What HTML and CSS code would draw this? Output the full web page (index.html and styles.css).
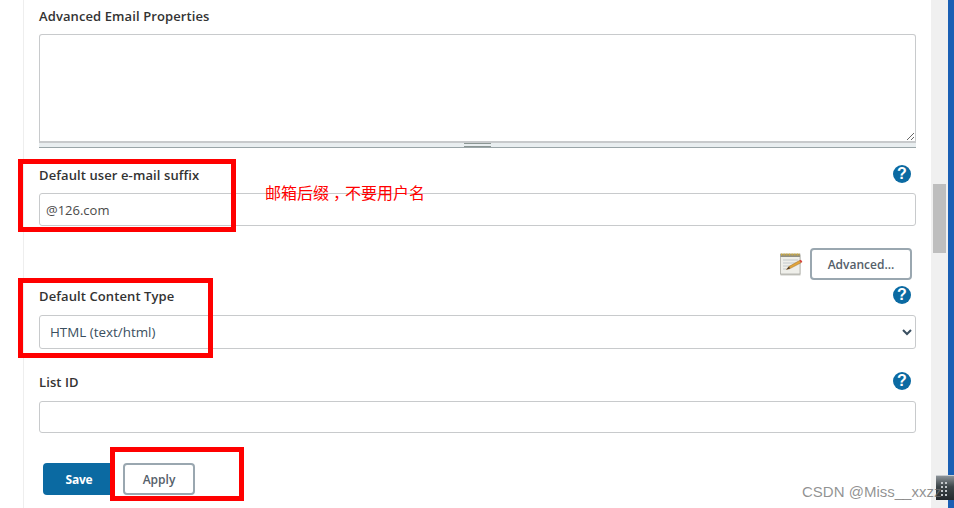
FILE: index.html
```html
<!DOCTYPE html>
<html lang="en">
  <head>
    <meta charset="UTF-8" />
    <title>Configure System</title>
    <link rel="stylesheet" href="styles.css">
  </head>
  <body>
    <div class="page">
      <div class="gutter"></div>

      <main class="main">
        <!-- Advanced properties -->
        <label class="label">Advanced Email Properties</label>
        <div class="textarea-wrap">
          <textarea class="textarea"></textarea>
          <div class="grippie"><span class="grip-handle"></span></div>
        </div>

        <!-- Suffix -->
        <div class="label-row first-row">
          <label class="label">Default user e-mail suffix</label>
          <span class="help">?</span>
        </div>
        <input class="input suffix" type="text" value="@126.com" />

        <div class="advanced-row">
          <svg class="notepad" width="24" height="24" viewBox="0 0 24 24">
            <rect x="1.5" y="3" width="20" height="20.5" fill="#c9c9c4" />
            <rect x="1.5" y="2" width="19.5" height="20" fill="#efefea" stroke="#a6a6a0" stroke-width="0.7" />
            <rect x="1.5" y="2" width="19.5" height="3" fill="#8f8f86" />
            <path d="M2 2.5h19" stroke="#d2ad3c" stroke-width="2" stroke-dasharray="1 0.6" />
            <path d="M4 8h15M4 11h15M4 14h9M4 17h4" stroke="#c3c9cb" stroke-width="1.2" />
            <path d="M7.5 17.5L10 14.5 20.5 8.5 22 10.8 11 16.6z" fill="#e2a53a" stroke="#9c6b28" stroke-width="0.5" />
            <path d="M20.5 8.5L22 10.8 23.4 10 22 7.7z" fill="#d63c36" />
            <path d="M7.5 17.5L10 14.5 11 16.6z" fill="#4a3a2a" />
          </svg>
          <button class="btn btn-outline btn-advanced" type="button">Advanced...</button>
        </div>

        <!-- Content type -->
        <div class="label-row type-row">
          <label class="label">Default Content Type</label>
          <span class="help">?</span>
        </div>
        <select class="select">
          <option>HTML (text/html)</option>
        </select>

        <!-- List id -->
        <div class="label-row list-row">
          <label class="label">List ID</label>
          <span class="help">?</span>
        </div>
        <input class="input list-id" type="text" />

        <div class="buttons">
          <button class="btn btn-save" type="button">Save</button>
          <button class="btn btn-outline btn-apply" type="button">Apply</button>
        </div>
      </main>

      <div class="scrollbar"><div class="thumb"></div></div>
      <div class="edge"></div>
    </div>

    <!-- Annotations drawn over the screenshot -->
    <div class="mark mark-suffix"></div>
    <div class="mark mark-type"></div>
    <div class="mark mark-apply"></div>
    <div class="note">邮箱后缀<span class="comma">，</span>不要用户名</div>
    <div class="corner"><div class="corner-dots"></div></div>
    <div class="watermark">CSDN @Miss__xxzz</div>
  </body>
</html>
```

FILE: styles.css
```css
:root {
  --text: #333333;
  --border: #c8cacc;
  --blue: #0b6aa2;
  --outline: #9aa7b0;
  --red: #ff0000;
}

* {
  box-sizing: border-box;
}

html,
body {
  margin: 0;
  height: 508px;
  overflow: hidden;
  background: #ffffff;
}

body {
  position: relative;
  font-family: "Open Sans", "Noto Sans", sans-serif;
  color: var(--text);
}

.page {
  display: flex;
  height: 508px;
}

.gutter {
  width: 23px;
  flex: none;
}

.main {
  flex: 1;
  min-width: 0;
  border-left: 1px solid #eeeeee;
  padding: 7px 15px 0;
}

.label {
  display: block;
  font-size: 13px;
  line-height: 18px;
  font-weight: 600;
  letter-spacing: 0.1px;
}

.label-row {
  display: flex;
  justify-content: space-between;
  align-items: center;
  height: 18px;
}

.first-row {
  margin-top: 18px;
}

.type-row {
  margin-top: 7px;
}

.list-row {
  margin-top: 24px;
}

.help {
  width: 18px;
  height: 18px;
  margin: -2px 5px 0 0;
  border-radius: 50%;
  background: var(--blue);
  color: #ffffff;
  font-family: "Liberation Sans", sans-serif;
  font-size: 16px;
  font-weight: 700;
  line-height: 18px;
  text-align: center;
}

.textarea-wrap {
  margin-top: 9px;
  height: 114px;
}

.textarea {
  display: block;
  width: 100%;
  height: 109px;
  border: 1px solid var(--border);
  border-bottom-width: 2px;
  border-radius: 3px 3px 0 0;
  background: #ffffff;
  resize: vertical;
}

.grippie {
  display: flex;
  justify-content: center;
  height: 5px;
  background: #e9eef0;
  border-bottom: 1px solid #9aa5a8;
}

.grip-handle {
  width: 27px;
  height: 4px;
  border-top: 1px solid #8b9694;
  border-bottom: 1px solid #8b9694;
}

.input,
.select {
  display: block;
  width: 100%;
  border: 1px solid var(--border);
  border-radius: 3px;
  background: #ffffff;
  font-family: inherit;
  font-size: 13px;
  color: #4a4a4a;
}

.input {
  padding: 0 6px;
}

.suffix {
  height: 33px;
  margin-top: 9px;
}

.list-id {
  height: 32px;
  margin-top: 10px;
}

.select {
  height: 34px;
  margin-top: 10px;
  padding: 0 6px;
  font-size: 13.4px;
  color: #3a4f60;
}

.advanced-row {
  display: flex;
  justify-content: flex-end;
  align-items: center;
  gap: 7px;
  height: 32px;
  margin-top: 22px;
  padding-right: 4px;
}

.btn {
  height: 32px;
  border-radius: 4px;
  font-family: inherit;
  font-size: 12px;
  font-weight: 600;
  padding: 0;
}

.btn-outline {
  background: #ffffff;
  border: 2px solid var(--outline);
  color: #55606a;
}

.btn-advanced {
  width: 102px;
}

.buttons {
  display: flex;
  gap: 8px;
  margin-top: 30px;
  padding-left: 4px;
}

.btn-save {
  width: 72px;
  background: var(--blue);
  border: none;
  color: #ffffff;
  font-weight: 700;
  letter-spacing: -0.2px;
}

.btn-apply {
  width: 72px;
}

.scrollbar {
  width: 17px;
  flex: none;
  background: #f0f0f0;
  padding: 184px 2px 0;
}

.thumb {
  height: 69px;
  background: #bebebe;
}

.edge {
  width: 6px;
  flex: none;
  background: #1a5fb4;
}

.mark {
  position: absolute;
  border: 5px solid var(--red);
}

.mark-suffix {
  left: 18px;
  top: 159px;
  width: 218px;
  height: 73px;
}

.mark-type {
  left: 18px;
  top: 278px;
  width: 195px;
  height: 80px;
}

.mark-apply {
  left: 110px;
  top: 447px;
  width: 134px;
  height: 54px;
}

.note {
  position: absolute;
  left: 265px;
  top: 181px;
  font-family: "Noto Sans CJK SC", sans-serif;
  font-size: 16px;
  line-height: 22px;
  color: var(--red);
}

/* half-width glyph centred in a full-width cell */
.comma {
  display: inline-block;
  width: 16px;
  text-align: center;
  font-feature-settings: "halt";
}

.corner {
  position: absolute;
  left: 936px;
  top: 475px;
  width: 18px;
  height: 25px;
  padding: 5px 6px 3px 4px;
  border-top: 1px solid #c8ccd0;
  background: linear-gradient(#8b9297, #3c4448 45%, #23282d);
}

.corner-dots {
  height: 100%;
  background-image: radial-gradient(#c4c8cc 1px, transparent 1px);
  background-size: 4px 4px;
}

.watermark {
  position: absolute;
  left: 802px;
  top: 482px;
  font-family: "Liberation Sans", sans-serif;
  font-size: 15px;
  line-height: 20px;
  color: rgba(110, 110, 110, 0.75);
}
```
